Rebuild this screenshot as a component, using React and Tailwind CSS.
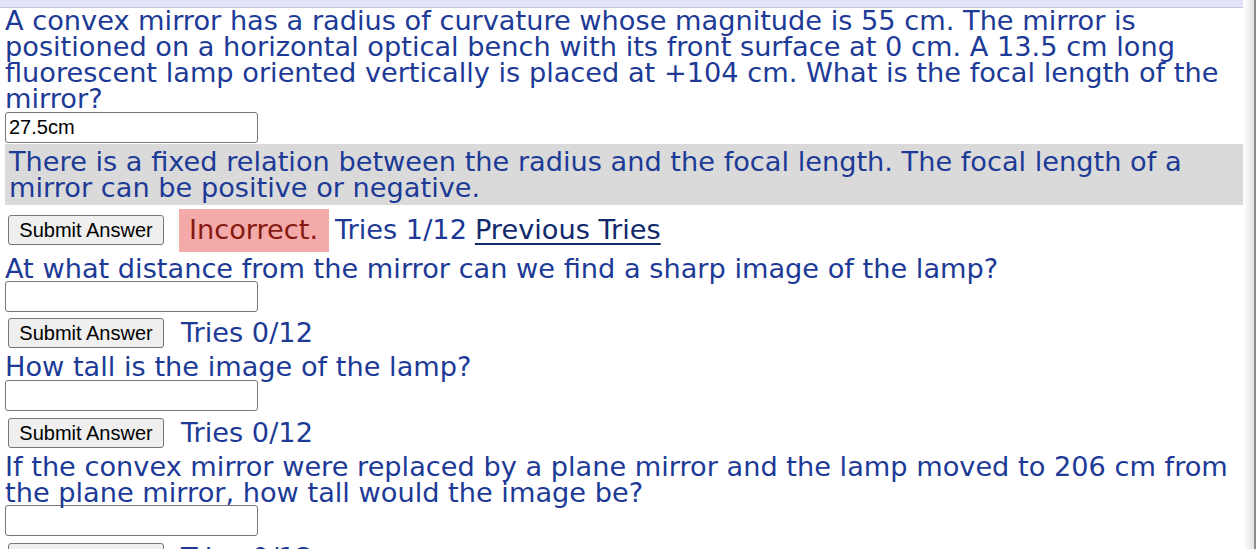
import React from "react";

const T = "text-[#1c3a96]";

function Input({ value = "" }) {
  return (
    <input
      readOnly
      value={value}
      className="block w-[253px] h-[31px] border border-[#767676] rounded-[3px] bg-white px-[3px] text-[20px] text-black outline-none"
      style={{ fontFamily: '"Liberation Sans", Arial, sans-serif' }}
    />
  );
}

function SubmitButton() {
  return (
    <button
      className="w-[156px] h-[30px] border border-[#767676] rounded-[3px] bg-[#efefef] text-[20px] leading-[22px] text-black shrink-0"
      style={{ fontFamily: '"Liberation Sans", Arial, sans-serif' }}
    >
      Submit Answer
    </button>
  );
}

export default function App() {
  return (
    <div
      className="flex items-start w-[1256px] h-[549px] overflow-hidden bg-white"
      style={{ fontFamily: '"DejaVu Sans", Verdana, sans-serif' }}
    >
      <div className="w-[1243px] shrink-0">
        <div className="h-[8px] bg-[#e2e2f8] border-b border-[#c6c6d2]" />
        <div className={`pl-[5px] text-[27.2px] leading-[26px] ${T}`}>
          <p>
            A convex mirror has a radius of curvature whose magnitude is 55 cm. The mirror is
            <br />
            positioned on a horizontal optical bench with its front surface at 0 cm. A 13.5 cm long
            <br />
            fluorescent lamp oriented vertically is placed at +104 cm. What is the focal length of the
            <br />
            mirror?
          </p>
          <Input value="27.5cm" />
          <div className="mt-[1px] h-[61px] bg-[#dadada] pl-[4px] pt-[5px]">
            There is a fixed relation between the radius and the focal length. The focal length of a
            <br />
            mirror can be positive or negative.
          </div>
          <div className="h-[51px] flex items-center pl-[3px] pb-[1px]">
            <SubmitButton />
            <div className="ml-[15px] w-[150px] h-[43px] bg-[#f4aaa9] text-[#84190f] pl-[10px] flex items-center">
              Incorrect.
            </div>
            <span className="ml-[6px]">Tries 1/12</span>
            <a className="ml-[8px] text-[#10296b] underline decoration-[2px] underline-offset-[4px]">
              Previous Tries
            </a>
          </div>
          <p>At what distance from the mirror can we find a sharp image of the lamp?</p>
          <div className="-mt-[1px]">
            <Input />
          </div>
          <div className="h-[42px] flex items-center pl-[3px]">
            <SubmitButton />
            <span className="ml-[17px]">Tries 0/12</span>
          </div>
          <p>How tall is the image of the lamp?</p>
          <Input />
          <div className="h-[43px] flex items-center pl-[3px]">
            <SubmitButton />
            <span className="ml-[17px]">Tries 0/12</span>
          </div>
          <p>
            If the convex mirror were replaced by a plane mirror and the lamp moved to 206 cm from
            <br />
            the plane mirror, how tall would the image be?
          </p>
          <div className="-mt-[1px]">
            <Input />
          </div>
          <div className="h-[43px] flex items-center pl-[3px]">
            <SubmitButton />
            <span className="ml-[17px]">Tries 0/12</span>
          </div>
        </div>
      </div>
      <div className="w-[11px] h-full shrink-0 bg-gradient-to-r from-white to-[#e4e4e4]" />
      <div className="w-[2px] h-full shrink-0 bg-[#8c8c8c]" />
    </div>
  );
}
